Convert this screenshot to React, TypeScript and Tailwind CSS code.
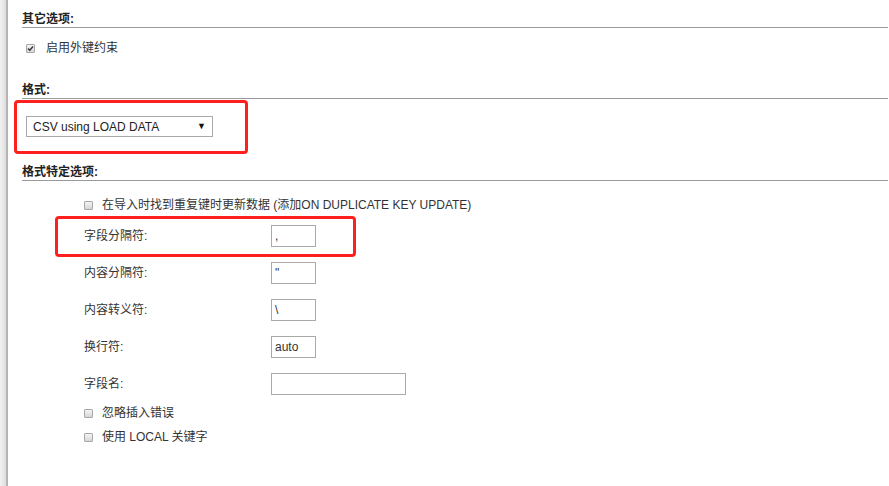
import React from "react"

const Box = ({ checked = false }: { checked?: boolean }) => (
  <span className="relative inline-block w-[9px] h-[9px] border border-[#a8a8a8] rounded-[1px] bg-gradient-to-b from-[#f4f4f4] to-[#d6d6d6] shrink-0">
    {checked && (
      <svg viewBox="0 0 9 9" className="absolute left-[-1px] top-[-1px] w-[9px] h-[9px]">
        <path d="M2 4.5 L3.8 6.3 L7 2.5" fill="none" stroke="#333" strokeWidth="1.4" />
      </svg>
    )}
  </span>
)

const Header = ({ text }: { text: string }) => (
  <div className="text-[12px] leading-[16px] font-bold text-[#222] border-b border-[#9a9a9a]">{text}</div>
)

const fields = [
  { label: "字段分隔符:", value: ",", w: "w-[45px]" },
  { label: "内容分隔符:", value: "\"", w: "w-[45px]" },
  { label: "内容转义符:", value: "\\", w: "w-[45px]" },
  { label: "换行符:", value: "auto", w: "w-[45px]" },
  { label: "字段名:", value: "", w: "w-[135px]" },
]

const App = () => {
  return (
    <div
      className="flex w-full h-[486px] bg-white text-[12px] text-[#333] overflow-hidden"
      style={{ fontFamily: '"Liberation Sans", Arial, "Noto Sans CJK SC", sans-serif' }}
    >
      <div className="w-[8px] h-full bg-gradient-to-r from-[#f2f2f2] to-[#dedede] border-r-2 border-[#b4b4b4] shrink-0" />
      <div className="flex-1 pl-[14px] pr-[1px] pt-[11px]">
        <Header text="其它选项:" />
        <div className="flex items-center gap-[11px] h-[16px] mt-[12px] pl-[4px]">
          <Box checked />
          <span>启用外键约束</span>
        </div>

        <div className="mt-[26px]">
          <Header text="格式:" />
        </div>
        <div className="mt-[1px] -ml-[8px] w-[234px] h-[54px] border-[3px] border-[#ff1f1f] rounded-[4px] pl-[9px] pt-[13px]">
          <div className="flex items-center justify-between w-[187px] h-[21px] border border-[#aaa] bg-white pl-[6px] pr-[6px]">
            <span className="text-[12px] text-[#222]">CSV using LOAD DATA</span>
            <span className="text-[9px] text-[#111]">▼</span>
          </div>
        </div>

        <div className="mt-[10px]">
          <Header text="格式特定选项:" />
        </div>
        <div className="flex items-center gap-[9px] h-[16px] mt-[16px] pl-[62px]">
          <Box />
          <span>在导入时找到重复键时更新数据 (添加ON DUPLICATE KEY UPDATE)</span>
        </div>

        <div className="relative mt-[12px] pl-[62px] flex flex-col gap-[15px]">
          {fields.map((f) => (
            <div key={f.label} className="flex items-center h-[22px]">
              <span className="w-[187px]">{f.label}</span>
              <div className={`${f.w} h-[22px] border border-[#aaa] bg-white pl-[3px] flex items-center text-[12px] text-[#333]`}>
                {f.value}
              </div>
            </div>
          ))}
          <div className="absolute left-[33px] top-[-9px] w-[301px] h-[41px] border-[3px] border-[#ff1f1f] rounded-[4px]" />
        </div>

        <div className="flex items-center gap-[9px] h-[16px] mt-[10px] pl-[62px]">
          <Box />
          <span>忽略插入错误</span>
        </div>
        <div className="flex items-center gap-[9px] h-[16px] mt-[8px] pl-[62px]">
          <Box />
          <span>使用 LOCAL 关键字</span>
        </div>
      </div>
    </div>
  )
}

export default App
